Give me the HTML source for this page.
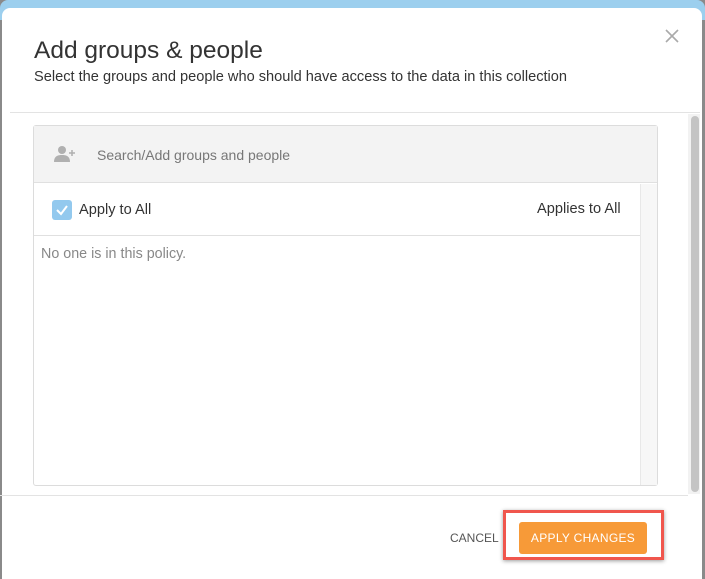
<!DOCTYPE html>
<html><head><style>
*{margin:0;padding:0;box-sizing:border-box}
html,body{width:705px;height:579px;overflow:hidden}
body{background:#8a8a8a;font-family:"Liberation Sans",sans-serif;position:relative}
.top{position:absolute;left:0;top:0;width:705px;height:20px;background:#9ccfee;border-radius:8px 8px 0 0}
.modal{position:absolute;left:2px;top:8px;width:700px;height:571px;background:#fff;border-radius:8px 8px 0 0}
.abs{position:absolute;white-space:nowrap}
</style></head><body>
<div class="top"></div>
<div class="modal"></div>
<div class="abs" style="left:34px;top:37px;font-size:24.5px;font-weight:300;color:#333">Add groups &amp; people</div>
<div class="abs" style="left:34px;top:69px;font-size:14.6px;color:#333">Select the groups and people who should have access to the data in this collection</div>
<svg class="abs" style="left:664px;top:28px" width="16" height="16"><path d="M2 2L14 14M14 2L2 14" stroke="#aaa" stroke-width="1.6"/></svg>
<div class="abs" style="left:10px;top:112px;width:690px;height:1px;background:#e3e3e3"></div>
<div class="abs" style="left:688px;top:114px;width:12px;height:380px;background:#f2f2f2"></div>
<div class="abs" style="left:691px;top:116px;width:8px;height:376px;background:#c4c4c4;border-radius:4px"></div>
<div class="abs" style="left:33px;top:125px;width:625px;height:361px;border:1px solid #dcdcdc;border-radius:3px;background:#fff"></div>
<div class="abs" style="left:34px;top:126px;width:623px;height:57px;background:#f3f3f3;border-bottom:1px solid #e0e0e0"></div>
<svg class="abs" style="left:54px;top:145px" width="24" height="18"><circle cx="8" cy="5" r="4" fill="#b0b0b0"/><path d="M0 17C0 11 4 10 8 10C12 10 16 11 16 17Z" fill="#b0b0b0"/><path d="M18 5V11M15 8H21" stroke="#b0b0b0" stroke-width="1.5"/></svg>
<div class="abs" style="left:97px;top:147px;font-size:14px;color:#777">Search/Add groups and people</div>
<div class="abs" style="left:640px;top:184px;width:17px;height:301px;background:#f7f7f7;border-left:1px solid #e8e8e8"></div>
<div class="abs" style="left:34px;top:235px;width:606px;height:1px;background:#e0e0e0"></div>
<div class="abs" style="left:52px;top:200px;width:20px;height:20px;background:#93c9ee;border-radius:3px"></div>
<svg class="abs" style="left:52px;top:200px" width="20" height="20"><path d="M5 10L9 14L15 6" stroke="#fff" stroke-width="2" fill="none"/></svg>
<div class="abs" style="left:79px;top:202px;font-size:14.6px;color:#333">Apply to All</div>
<div class="abs" style="left:537px;top:201px;font-size:14.6px;color:#333">Applies to All</div>
<div class="abs" style="left:41px;top:246px;font-size:14.3px;color:#888">No one is in this policy.</div>
<div class="abs" style="left:0px;top:495px;width:688px;height:1px;background:#e3e3e3"></div>
<div class="abs" style="left:450px;top:531px;font-size:12px;color:#555;letter-spacing:0px">CANCEL</div>
<div class="abs" style="left:503px;top:510px;width:161px;height:50px;border:3px solid #f0564d;box-shadow:0 1px 4px rgba(0,0,0,.4)"></div>
<div class="abs" style="left:519px;top:522px;width:128px;height:32px;background:#f79a38;border-radius:3px;color:#fff;font-size:12px;letter-spacing:0.3px;text-align:center;line-height:32px">APPLY CHANGES</div>
</body></html>
